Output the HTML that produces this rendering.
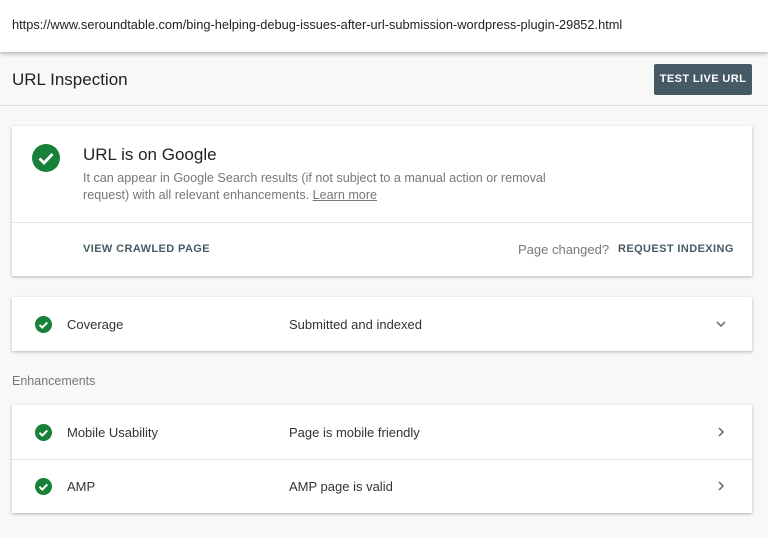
<!DOCTYPE html>
<html><head><style>
*{margin:0;padding:0;box-sizing:border-box}
body{width:768px;height:537px;background:#f8f8f8;font-family:"Liberation Sans",sans-serif;position:relative;overflow:hidden;color:#202124}
.top{position:absolute;left:0;top:0;width:768px;height:52px;background:#fff;box-shadow:0 2px 4px rgba(0,0,0,.25);z-index:2}
.top span{position:absolute;left:12px;top:17px;font-size:12.8px;color:#222}
.abs{position:absolute}
.card{position:absolute;left:12px;width:740px;background:#fff;box-shadow:0 1px 3px rgba(0,0,0,.28)}
.row{position:absolute;left:0;width:740px;height:54px;font-size:13px;color:#333}
.row .l{position:absolute;left:55px;top:20px}
.row .v{position:absolute;left:277px;top:20px}
.row svg.c{position:absolute;left:23px;top:19px}
.row svg.a{position:absolute;left:703px;top:21px}
.btn{font-weight:bold;font-size:11px;letter-spacing:.4px;color:#4a5a64}
</style></head><body>
<div class="top"><span>https://www.seroundtable.com/bing-helping-debug-issues-after-url-submission-wordpress-plugin-29852.html</span></div>
<div class="abs" style="left:12px;top:70px;font-size:17px;color:#222">URL Inspection</div>
<div class="abs" style="left:654px;top:64px;width:98px;height:31px;background:#455a64;border-radius:2px;color:#fff;font-size:11px;font-weight:bold;letter-spacing:.4px;text-align:center;line-height:31px">TEST LIVE URL</div>
<div class="abs" style="left:0;top:105px;width:768px;height:1px;background:#e2e2e2"></div>

<div class="card" style="top:126px;height:150px">
<svg class="abs" style="left:20px;top:18px" width="28" height="28" viewBox="0 0 28 28"><circle cx="14" cy="14" r="14" fill="#188038"/><path d="M7.5 14.5l4.5 4.5 8.5-9" stroke="#fff" stroke-width="2.8" fill="none"/></svg>
<div class="abs" style="left:71px;top:19px;font-size:17px;color:#222">URL is on Google</div>
<div class="abs" style="left:71px;top:44px;font-size:12.6px;color:#777;line-height:17px;width:480px">It can appear in Google Search results (if not subject to a manual action or removal request) with all relevant enhancements. <u>Learn more</u></div>
<div class="abs" style="left:0;top:96px;width:740px;height:1px;background:#e6e6e6"></div>
<div class="abs btn" style="left:71px;top:117px">VIEW CRAWLED PAGE</div>
<div class="abs" style="left:506px;top:116px;font-size:13px;color:#777">Page changed?</div>
<div class="abs btn" style="left:606px;top:117px">REQUEST INDEXING</div>
</div>

<div class="card" style="top:297px;height:54px">
<div class="row" style="top:0"><svg class="c" width="17" height="17" viewBox="0 0 17 17"><circle cx="8.5" cy="8.5" r="8.5" fill="#188038"/><path d="M4.5 8.8l2.8 2.8 5-5.2" stroke="#fff" stroke-width="2" fill="none"/></svg><span class="l">Coverage</span><span class="v">Submitted and indexed</span><svg class="a" width="12" height="12" viewBox="0 0 12 12"><path d="M2 4l4 4 4-4" stroke="#666" stroke-width="1.5" fill="none"/></svg></div>
</div>

<div class="abs" style="left:12px;top:374px;font-size:12.5px;color:#777">Enhancements</div>

<div class="card" style="top:405px;height:108px">
<div class="row" style="top:0"><svg class="c" width="17" height="17" viewBox="0 0 17 17"><circle cx="8.5" cy="8.5" r="8.5" fill="#188038"/><path d="M4.5 8.8l2.8 2.8 5-5.2" stroke="#fff" stroke-width="2" fill="none"/></svg><span class="l">Mobile Usability</span><span class="v">Page is mobile friendly</span><svg class="a" width="12" height="12" viewBox="0 0 12 12"><path d="M4 2l4 4-4 4" stroke="#666" stroke-width="1.5" fill="none"/></svg></div>
<div class="abs" style="left:0;top:54px;width:740px;height:1px;background:#e6e6e6"></div>
<div class="row" style="top:54px"><svg class="c" width="17" height="17" viewBox="0 0 17 17"><circle cx="8.5" cy="8.5" r="8.5" fill="#188038"/><path d="M4.5 8.8l2.8 2.8 5-5.2" stroke="#fff" stroke-width="2" fill="none"/></svg><span class="l">AMP</span><span class="v">AMP page is valid</span><svg class="a" width="12" height="12" viewBox="0 0 12 12"><path d="M4 2l4 4-4 4" stroke="#666" stroke-width="1.5" fill="none"/></svg></div>
</div>
</body></html>
